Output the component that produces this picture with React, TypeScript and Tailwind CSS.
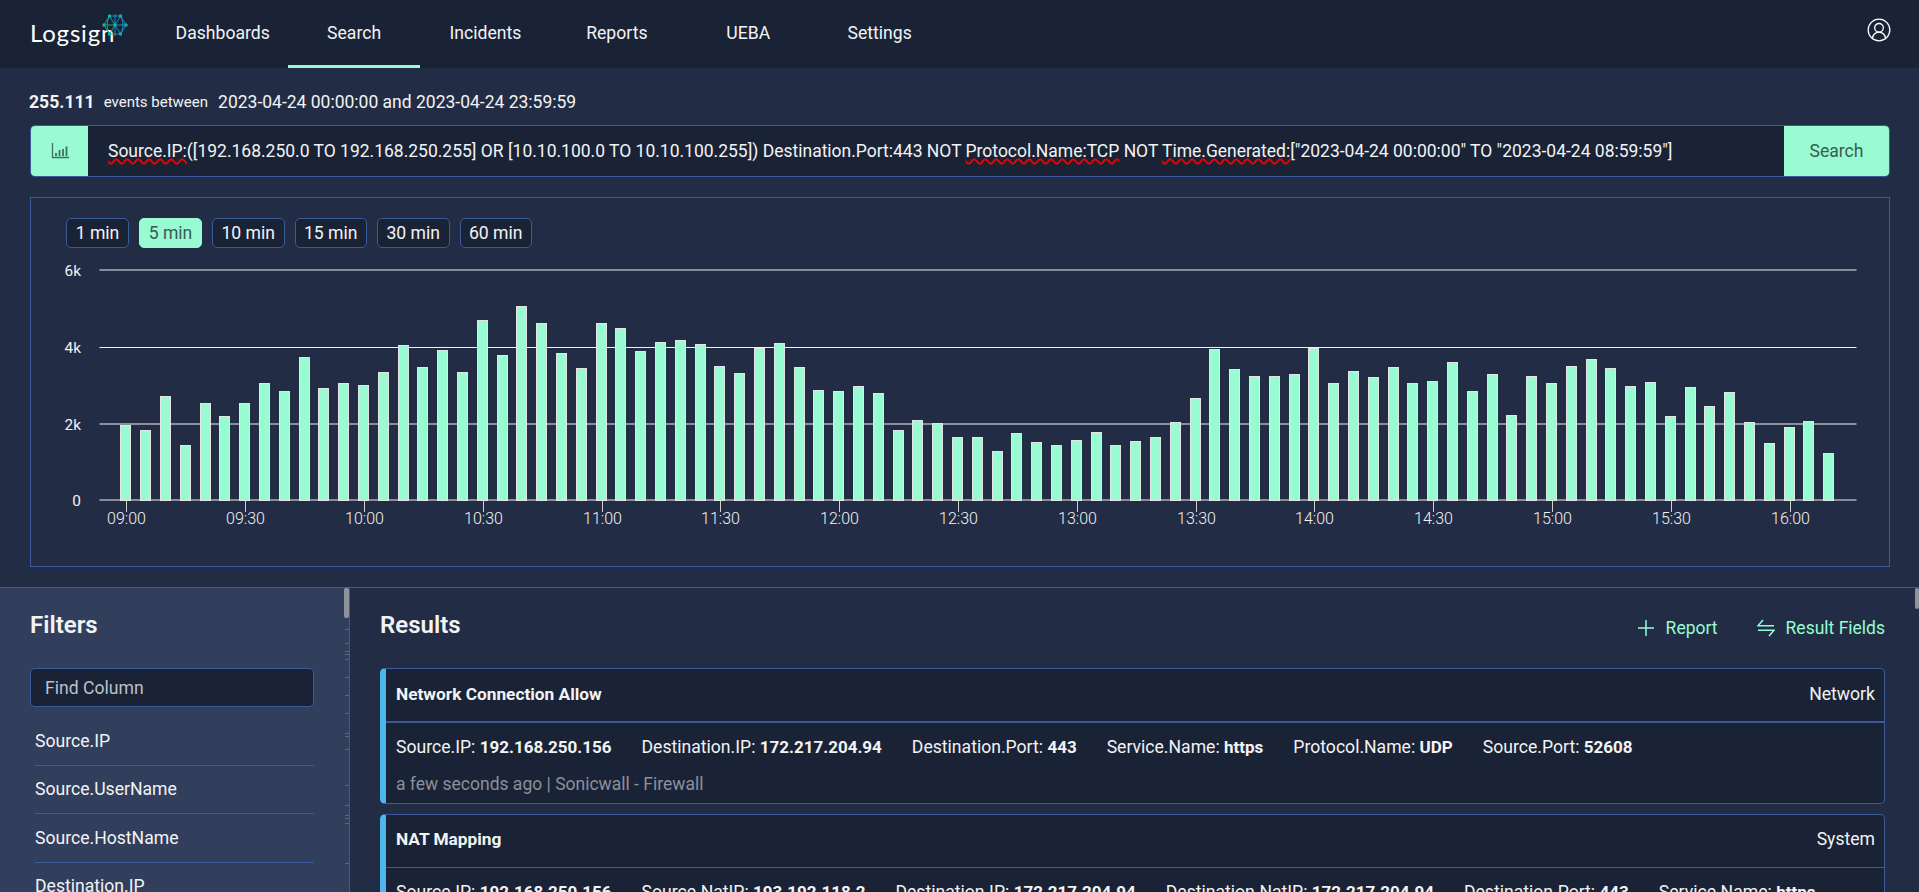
import { CircleUserRound } from 'lucide-react';

/** Bar heights in px above the baseline, one per 5 minutes from 09:00 */
const BARS = [
  75, 70, 104, 55, 97, 84, 97, 117, 109, 143, 112, 117, 115, 128, 155, 133, 150, 128, 180, 145, 194, 177, 147, 132, 177,
  172, 149, 158, 160, 156, 134, 127, 152, 157, 133, 110, 109, 114, 107, 70, 80, 77, 63, 63, 49, 67, 58, 55, 60, 68, 55,
  59, 63, 78, 102, 151, 131, 124, 124, 126, 152, 117, 129, 123, 133, 117, 119, 138, 109, 126, 85, 124, 117, 134, 141,
  132, 114, 118, 84, 113, 94, 108, 78, 57, 73, 79, 47,
];

const TIME_LABELS = [
  '09:00', '09:30', '10:00', '10:30', '11:00', '11:30', '12:00', '12:30',
  '13:00', '13:30', '14:00', '14:30', '15:00', '15:30', '16:00',
];

const Y_LABELS = [
  { label: '6k', y: 270 },
  { label: '4k', y: 347.5 },
  { label: '2k', y: 424 },
  { label: '0', y: 500 },
];

const NAV_ITEMS = ['Dashboards', 'Search', 'Incidents', 'Reports', 'UEBA', 'Settings'];
const INTERVALS = ['1 min', '5 min', '10 min', '15 min', '30 min', '60 min'];
const FILTER_COLUMNS = ['Source.IP', 'Source.UserName', 'Source.HostName', 'Destination.IP', 'Destination.Port'];
const SCROLL_MARKS = [629, 643, 651, 654, 659, 677, 695, 713, 733, 736, 749, 785, 805, 815, 818, 823, 863];

const RESULTS = [
  {
    title: 'Network Connection Allow',
    category: 'Network',
    meta: 'a few seconds ago | Sonicwall - Firewall',
    fields: [
      ['Source.IP', '192.168.250.156'],
      ['Destination.IP', '172.217.204.94'],
      ['Destination.Port', '443'],
      ['Service.Name', 'https'],
      ['Protocol.Name', 'UDP'],
      ['Source.Port', '52608'],
    ],
  },
  {
    title: 'NAT Mapping',
    category: 'System',
    meta: 'a few seconds ago | Sonicwall - Firewall',
    fields: [
      ['Source.IP', '192.168.250.156'],
      ['Source.NatIP', '193.192.118.2'],
      ['Destination.IP', '172.217.204.94'],
      ['Destination.NatIP', '172.217.204.94'],
      ['Destination.Port', '443'],
      ['Service.Name', 'https'],
    ],
  },
];

function Logo() {
  return (
    <div className="relative h-[34px] w-[100px]">
      <span className="font-[family-name:Lato,sans-serif] text-[24px] font-normal leading-[31px] tracking-[0.8px] text-white">
        Logsign
      </span>
      <svg className="absolute left-[69px] -top-[6px]" width="32" height="28" viewBox="0 0 32 28" fill="none">
        <path d="M10.5 5 5 14l5.5 9M10.5 5C7.500 9 7.500 19 10.500 23M10.5 5 16 14l-5.5 9M5 14h11" stroke="#14b37f" strokeWidth="0.9" />
        <path d="M10.5 5h11L27 14l-5.500 9h-11M16 3v22M21.500 5 16 14l5.500 9M16 14h11M21.500 5c3 4 3 14 0 18" stroke="#1a96cc" strokeWidth="0.9" />
        {[[10.5, 5], [21.5, 5], [27, 14], [21.5, 23], [10.5, 23], [5, 14], [16, 14]].map(([cx, cy]) => (
          <circle key={`${cx}-${cy}`} cx={cx} cy={cy} r="1.7" fill="#06b8b0" />
        ))}
      </svg>
    </div>
  );
}

function Chart() {
  return (
    <svg className="mt-[2px] block" width="1857" height="316" viewBox="31 250 1857 316">
      {Y_LABELS.map(({ label, y }) => (
        <g key={label}>
          <line x1="99.500" x2="1856.500" y1={y} y2={y} stroke="#f0f0f0" strokeWidth="1" />
          <text x="81" y={y + 5.500} textAnchor="end" fill="#f2f2f2" fontSize="15.400">
            {label}
          </text>
        </g>
      ))}
      {BARS.map((h, i) => (
        <rect
          key={i}
          x={Math.round(126.300 + i * 19.800 - 5) - 0.500}
          y={Math.round(500 - h) + 0.500}
          width="10"
          height={Math.round(h)}
          fill="#98fbd2"
          stroke="#e4e4e4"
          strokeWidth="1"
        />
      ))}
      {TIME_LABELS.map((label, i) => {
        const x = Math.round(126.300 + i * 118.800) + 0.500;
        return (
          <g key={label}>
            <line x1={x} x2={x} y1="501" y2="512" stroke="#d0d0d0" strokeWidth="1" />
            <text x={x} y="524" textAnchor="middle" fill="#f2f2f2" fontSize="16" fontWeight="300">
              {label}
            </text>
          </g>
        );
      })}
    </svg>
  );
}

export default function App() {
  return (
    <div className="flex h-screen flex-col overflow-hidden bg-[#222d45] font-[family-name:Roboto,sans-serif] text-[#f2f3f5]">
      {/* Top navigation */}
      <header className="flex h-[68px] shrink-0 items-center bg-[#1a2336]">
        <div className="w-[157px] pl-[30px]">
          <Logo />
        </div>
        <nav className="flex h-full">
          {NAV_ITEMS.map((item) => (
            <a
              key={item}
              href="#"
              className={[
                'flex h-full w-[131.400px] items-center justify-center border-b-[3px] pt-[2px] text-[17.600px]',
                item === 'Search' ? 'border-[#98fbd2]' : 'border-transparent',
              ].join(' ')}
            >
              {item}
            </a>
          ))}
        </nav>
        <div className="mb-2 ml-auto pr-[27px]">
          <CircleUserRound size={26} strokeWidth={1.200} className="text-white" />
        </div>
      </header>

      {/* Query + histogram */}
      <section className="shrink-0 pb-[20px] pl-[30px] pr-[29px]">
        <div className="mt-[23px] flex h-[22px] items-center">
          <span className="-ml-px text-[17.600px] font-bold">255.111</span>
          <span className="ml-[9px] text-[15px]">events between</span>
          <span className="ml-[10px] text-[17.500px]">2023-04-24 00:00:00 and 2023-04-24 23:59:59</span>
        </div>

        <div className="mt-[12px] flex h-[52px] overflow-hidden rounded-[5px] border border-[#3b5a9a] bg-[#1a2336]">
          <div className="flex w-[57px] shrink-0 items-center justify-center bg-[#98fbd2]">
            <svg width="20" height="18" viewBox="0 0 20 18" fill="none" stroke="#3f6f62">
              <path d="M2.500 1v14.500H19" strokeWidth="1.300" />
              <path d="M6 14v-3M9.500 14V8M13 14V7M16.500 14V4.500" strokeWidth="1.800" />
            </svg>
          </div>
          <div className="flex flex-1 items-center whitespace-nowrap pl-[20px] text-[17.490px]">
            <span>
              <span className="underline decoration-[#f00000] decoration-wavy decoration-[1.500px] underline-offset-[1px]">
                Source.IP:
              </span>
              ([192.168.250.0 TO 192.168.250.255] OR [10.10.100.0 TO 10.10.100.255]) Destination.Port:443 NOT{' '}
              <span className="underline decoration-[#f00000] decoration-wavy decoration-[1.500px] underline-offset-[1px]">
                Protocol.Name:TCP
              </span>{' '}
              NOT{' '}
              <span className="underline decoration-[#f00000] decoration-wavy decoration-[1.500px] underline-offset-[1px]">
                Time.Generated:
              </span>
              ["2023-04-24 00:00:00" TO "2023-04-24 08:59:59"]
            </span>
          </div>
          <button type="button" className="w-[105px] shrink-0 bg-[#98fbd2] text-[17.600px] text-[#3a5a52]">
            Search
          </button>
        </div>

        <div className="mt-[20px] h-[370px] border border-[#3b5a9a]">
          <div className="ml-[35px] mt-[20px] flex h-[30px] gap-[10px]">
            {INTERVALS.map((label) => (
              <button
                key={label}
                type="button"
                className={[
                  'rounded-[5px] border text-[17.600px]',
                  label === '5 min'
                    ? 'w-[63px] border-[#98fbd2] bg-[#98fbd2] text-[#3a5a52]'
                    : 'border-[#3b5a9a] bg-[#1a2336]',
                  label === '1 min' ? 'w-[63px]' : '',
                  label !== '1 min' && label !== '5 min' ? 'w-[72.500px]' : '',
                ].join(' ')}
              >
                {label}
              </button>
            ))}
          </div>
          <Chart />
        </div>
      </section>

      {/* Filters + results */}
      <section className="relative flex min-h-0 flex-1 border-t border-[#3b5a9a]">
        <aside className="w-[350px] shrink-0 border-r border-[#3b5a9a] bg-[#323f5c] px-[30px] pt-[22px]">
          <h2 className="text-[24px] font-semibold leading-[30px]">Filters</h2>
          <input
            placeholder="Find Column"
            className="mt-[28px] h-[39px] w-[284px] rounded-[5px] border border-[#3b5a9a] bg-[#1a2336] px-[14px] text-[17.600px] placeholder:text-[#bcc0c8]"
          />
          <ul className="ml-[5px] mt-[10px] w-[279px]">
            {FILTER_COLUMNS.map((name) => (
              <li key={name} className="flex h-[48.600px] items-center border-b border-[#3b5a9a] text-[17.600px]">
                {name}
              </li>
            ))}
          </ul>
        </aside>

        <main className="min-w-0 flex-1 pl-[30px] pr-[34px] pt-[22px]">
          <div className="flex h-[30px] items-center justify-between">
            <h2 className="text-[24px] font-semibold leading-[30px]">Results</h2>
            <div className="mt-[6px] flex items-center text-[17.500px] text-[#98fbd2]">
              <svg width="18" height="18" viewBox="0 0 18 18" fill="none" stroke="#98fbd2" strokeWidth="1.500">
                <path d="M9 1v16M1 9h16" />
              </svg>
              <span className="ml-[11px]">Report</span>
              <svg className="ml-[39px]" width="18" height="18" viewBox="0 0 18 18" fill="none" stroke="#98fbd2" strokeWidth="1.500">
                <path d="M6 1 1 6.800h16M12 17l5-5.800H1" />
              </svg>
              <span className="ml-[11px]">Result Fields</span>
            </div>
          </div>

          <div className="mt-[28px] flex flex-col gap-[10px]">
            {RESULTS.map((result, index) => (
              <article
                key={result.title}
                className="shrink-0 rounded-[5px] border border-l-[6px] border-[#3b5a9a] border-l-[#4db6ea] bg-[#1a2336]"
              >
                <div
                  className={[
                    'flex items-center justify-between border-[#3b5a9a] pl-[10px] pr-[9px] text-[17.600px]',
                    index === 0 ? 'h-[54px] border-b-2 pb-[1px]' : 'h-[53px] border-b pb-[3px]',
                  ].join(' ')}
                >
                  <span className="text-[17.300px] font-bold">{result.title}</span>
                  <span>{result.category}</span>
                </div>
                <div className="pb-[7px] pl-[10px] pt-[12px]">
                  <div className="flex h-[24px] items-center gap-[30px] whitespace-nowrap text-[17.600px]">
                    {result.fields.map(([key, value]) => (
                      <span key={key}>
                        {key}: <b className="text-[17px] font-bold">{value}</b>
                      </span>
                    ))}
                  </div>
                  <div className="mt-[13px] h-[24px] text-[17.500px] leading-[24px] text-[#8b909b]">{result.meta}</div>
                </div>
              </article>
            ))}
          </div>
        </main>

        {/* Scrollbars over the panels */}
        {SCROLL_MARKS.map((y) => (
          <div key={y} className="absolute left-[345px] h-px w-[4px] bg-[#5d6880]" style={{ top: y - 588 }} />
        ))}
        <div className="absolute left-[344px] top-0 h-[30px] w-[5px] rounded-[2px] bg-[#8f939c]" />
        <div className="absolute right-0 top-0 h-[21px] w-[4px] rounded-[2px] bg-[#8f939c]" />
      </section>
    </div>
  );
}
